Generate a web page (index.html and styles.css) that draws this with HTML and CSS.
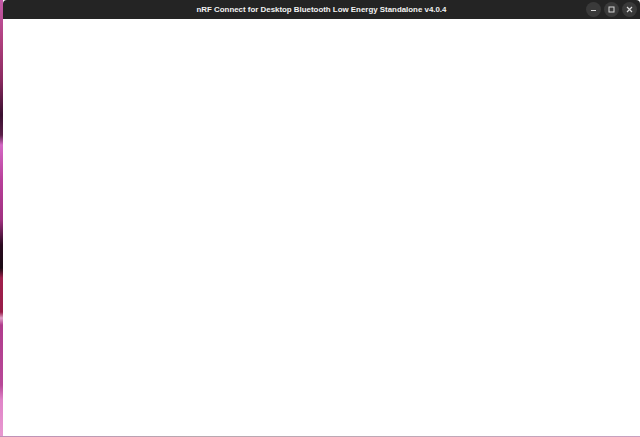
FILE: index.html
```html
<!DOCTYPE html>
<html lang="en">
<head>
<meta charset="utf-8">
<title>nRF Connect for Desktop Bluetooth Low Energy Standalone v4.0.4</title>
<link rel="stylesheet" href="styles.css">
</head>
<body>
<div class="desktop">
  <div class="edge"></div>
  <div class="window">
    <div class="titlebar">
      <div class="title">nRF Connect for Desktop Bluetooth Low Energy Standalone v4.0.4</div>
      <div class="controls">
        <span class="btn"><svg width="15" height="15" viewBox="0 0 15 15"><rect x="5" y="8" width="5" height="1" fill="#d8d8d8"/></svg></span>
        <span class="btn"><svg width="15" height="15" viewBox="0 0 15 15"><rect x="5" y="5" width="5" height="5" fill="none" stroke="#d8d8d8" stroke-width="1"/></svg></span>
        <span class="btn"><svg width="15" height="15" viewBox="0 0 15 15"><path d="M5 5 L10 10 M10 5 L5 10" stroke="#d8d8d8" stroke-width="1.2"/></svg></span>
      </div>
    </div>
    <div class="content"></div>
  </div>
</div>
<div class="bottom"></div>
</body>
</html>
```

FILE: styles.css
```css
html, body {
  margin: 0;
  padding: 0;
  width: 640px;
  height: 437px;
  overflow: hidden;
  background: #c8a8c0;
}
.desktop {
  display: flex;
  height: 436px;
}
.edge {
  width: 3px;
  flex: none;
  background: linear-gradient(to bottom,
    #c45aa8 0px,
    #b0407e 40px,
    #8a2a60 80px,
    #3a1030 115px,
    #5a2048 135px,
    #d468c4 145px,
    #b8409a 180px,
    #a03080 220px,
    #2a0a20 245px,
    #1a0a14 268px,
    #a0204c 278px,
    #981c48 312px,
    #e0a0c8 318px,
    #b03c8c 325px,
    #b84898 385px,
    #e084c8 400px,
    #e898d0 436px);
}
.window {
  flex: 1;
  display: flex;
  flex-direction: column;
  background: #ffffff;
}
.titlebar {
  height: 19px;
  flex: none;
  background: #242424;
  border-top-left-radius: 4px;
  border-top-right-radius: 4px;
  display: flex;
  align-items: center;
  justify-content: center;
  position: relative;
}
.title {
  font-family: "Liberation Sans", "DejaVu Sans", sans-serif;
  font-weight: bold;
  font-size: 7.9px;
  color: #f2f2f2;
  white-space: nowrap;
}
.controls {
  position: absolute;
  right: 3px;
  top: 2px;
  display: flex;
  gap: 3px;
}
.btn {
  width: 15px;
  height: 15px;
  border-radius: 50%;
  background: #3a3a3a;
  display: flex;
}
.content {
  flex: 1;
  background: #ffffff;
}
.bottom {
  height: 1px;
  background: linear-gradient(to right, #c090b8, #b8a8b0 30%, #c0a8b8 70%, #c8a0c0);
}
```
